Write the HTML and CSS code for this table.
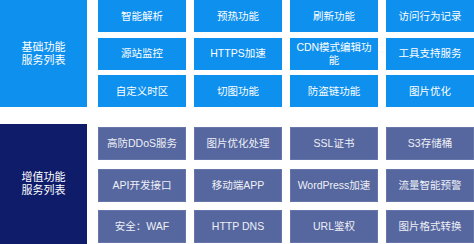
FILE: index.html
```html
<!DOCTYPE html>
<html lang="zh">
<head>
<meta charset="utf-8">
<link rel="stylesheet" href="styles.css">
</head>
<body>
<div class="page">
  <section class="group basic">
    <div class="label">基础功能<br>服务列表</div>
    <div class="cells">
      <div class="cell">智能解析</div>
      <div class="cell">预热功能</div>
      <div class="cell">刷新功能</div>
      <div class="cell">访问行为记录</div>
      <div class="cell">源站监控</div>
      <div class="cell">HTTPS加速</div>
      <div class="cell">CDN模式编辑功能</div>
      <div class="cell">工具支持服务</div>
      <div class="cell">自定义时区</div>
      <div class="cell">切图功能</div>
      <div class="cell">防盗链功能</div>
      <div class="cell">图片优化</div>
    </div>
  </section>
  <section class="group extra">
    <div class="label">增值功能<br>服务列表</div>
    <div class="cells">
      <div class="cell">高防DDoS服务</div>
      <div class="cell">图片优化处理</div>
      <div class="cell">SSL证书</div>
      <div class="cell">S3存储桶</div>
      <div class="cell">API开发接口</div>
      <div class="cell">移动端APP</div>
      <div class="cell">WordPress加速</div>
      <div class="cell">流量智能预警</div>
      <div class="cell">安全：WAF</div>
      <div class="cell">HTTP DNS</div>
      <div class="cell">URL鉴权</div>
      <div class="cell">图片格式转换</div>
    </div>
  </section>
</div>
</body>
</html>
```
FILE: styles.css
```css
html, body {
  margin: 0;
  padding: 0;
  background: #ffffff;
}
body {
  width: 474px;
  height: 244px;
  overflow: hidden;
  font-family: "Liberation Sans", "Noto Sans CJK SC", sans-serif;
  font-size: 10.5px;
  line-height: 13px;
  color: #ffffff;
}
.page {
  display: flex;
  flex-direction: column;
  gap: 17px;
}
.group {
  display: grid;
  grid-template-columns: 87px 1fr;
  column-gap: 11px;
}
.label {
  display: flex;
  align-items: center;
  justify-content: center;
  text-align: center;
  font-size: 11px;
}
.cells {
  display: grid;
  grid-template-columns: repeat(4, 88px);
  column-gap: 8px;
}
.cell {
  display: flex;
  align-items: center;
  justify-content: center;
  text-align: center;
  padding: 0 6px;
}
.basic .label { background: #0e90ef; height: 107px; }
.basic .cells {
  grid-template-rows: 32px 32px 32px;
  row-gap: 5.5px;
}
.basic .cell { background: #0e90ef; }
.extra .label { background: #0f1c6a; height: 120px; }
.extra .cells {
  padding-top: 3px;
  grid-template-rows: 33px 33px 33px;
  row-gap: 8.5px;
}
.extra .cell {
  background: #56679f;
  border: 1px solid #6676ab;
  color: #eef0f6;
}
```
